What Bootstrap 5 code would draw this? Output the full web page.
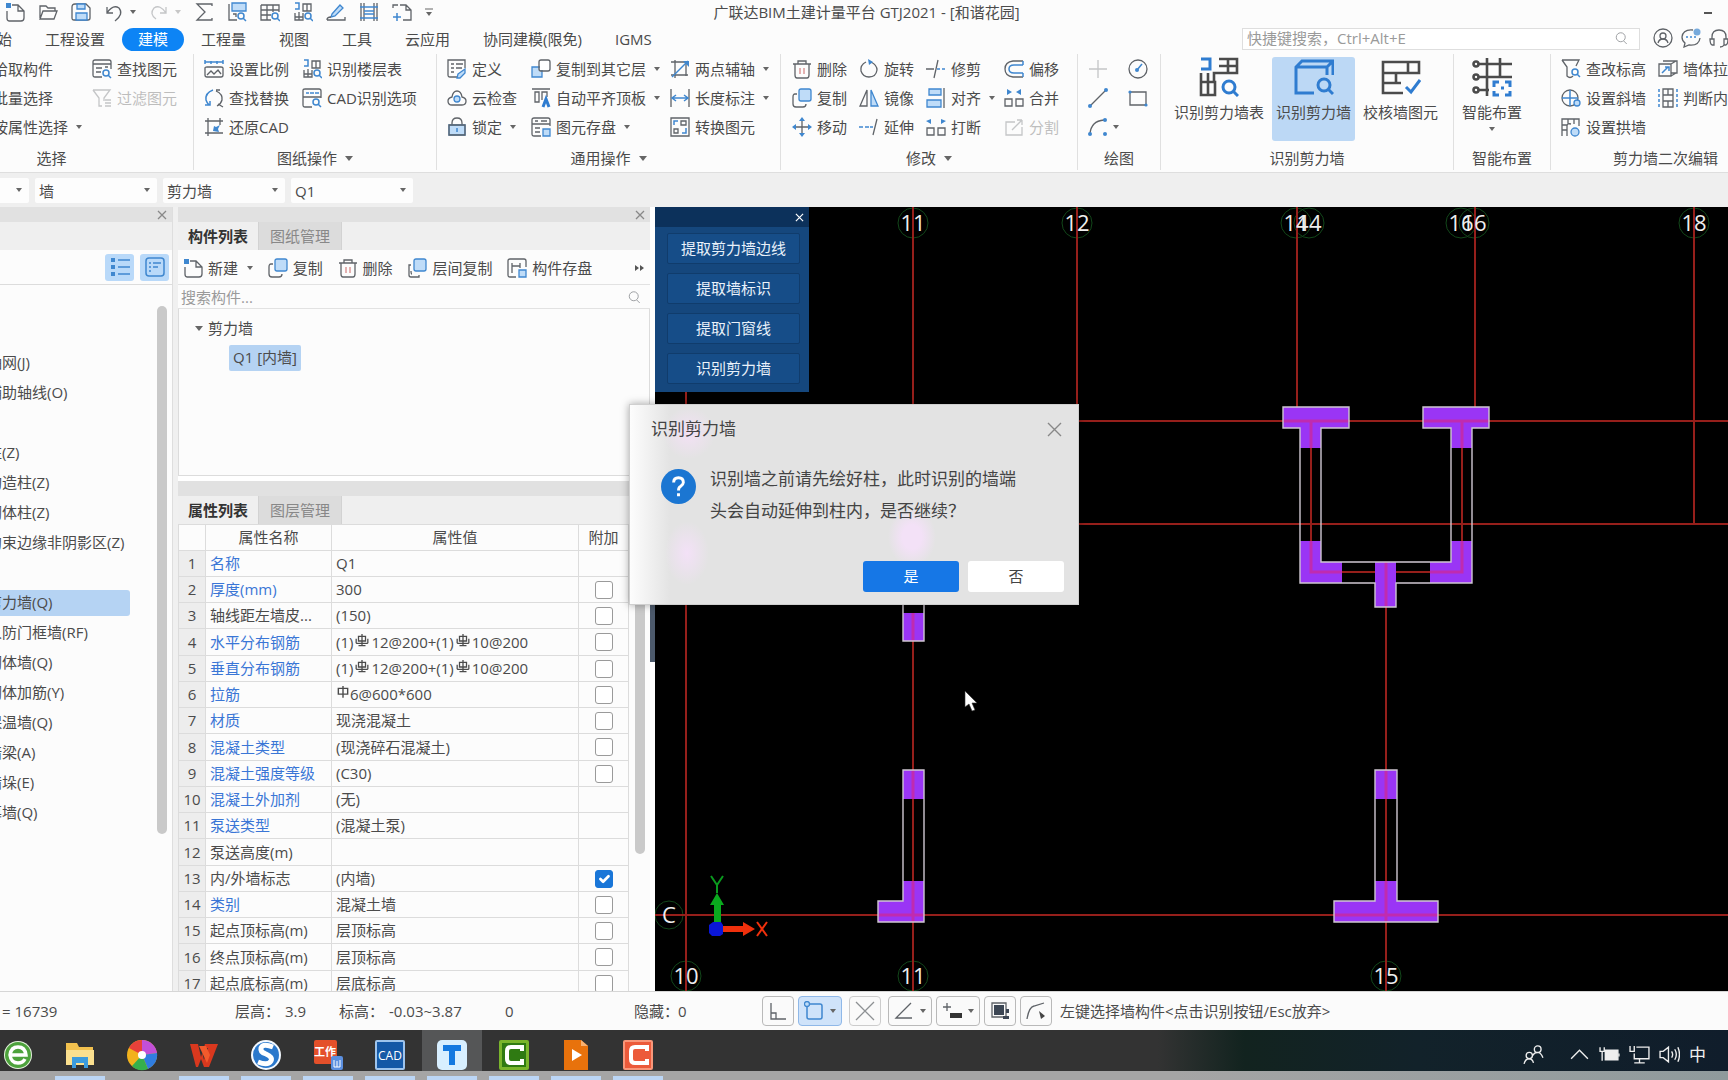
<!DOCTYPE html>
<html lang="zh-CN">
<head>
<meta charset="utf-8">
<meta name="viewport" content="width=device-width, initial-scale=1">
<title>广联达BIM土建计量平台 GTJ2021 - [和谐花园]</title>
<link href="https://cdn.jsdelivr.net/npm/bootstrap@5.3.0/dist/css/bootstrap.min.css" rel="stylesheet">
<style>
:root{--ink:#4b4b4b;--blue:#3f87cf;--line:#dcdcdc;--sel:#b5d3f3}
body{font:15px/20px "Open Sans","Noto Sans CJK SC",sans-serif;color:var(--ink);background:#f0f0f0}
button,input,select{font:inherit;color:inherit}
.app{height:100vh;overflow:hidden}
.bare{background:none;border:0;padding:0;white-space:nowrap}
svg.ic{width:20px;height:20px;flex:none;display:block}
svg.ic.sm{width:15px;opacity:.6}
.side{flex:1 1 0}
.k{fill:none;stroke:#5f6368;stroke-width:1.3}
.b{fill:none;stroke:var(--blue);stroke-width:1.5}
.f{fill:#bfdcf8;stroke:var(--blue);stroke-width:1.3}
.s{fill:var(--blue)}
.kk{fill:none;stroke:#4b4b4b;stroke-width:2.6}
.bb{fill:none;stroke:#2f7cd0;stroke-width:3}
.dim{opacity:.35}
.tri{width:0;height:0;border:4px solid transparent;border-top:5px solid #666;border-bottom:0;flex:none}
.tri-sm{border-width:3px;border-top-width:4px;border-bottom-width:0}
/* title and menu */
.topbar{background:#fcfcfc;height:27px;flex:none;padding-bottom:3px}
.quick{gap:13px;padding-left:5px}
.quick .split{gap:6px}
.menubar{background:#fcfcfc;height:27px;flex:none;padding-bottom:2px}
.menubar .nav{gap:1px;margin-left:-34px}
.menubar .nav-link{padding:1px 16px 2px;border-radius:12px;color:var(--ink);white-space:nowrap}
.menubar .nav-link.active{background:#0d84f5;color:#fff}
.keysearch{width:398px;height:22px;border:1px solid #dedede;padding:0 10px 2px 4px;margin-bottom:2px;background:#fff}
.plain-input{border:0;background:none;outline:0;min-width:0;padding:0}
.plain-input::placeholder{color:#9a9a9a;opacity:1}
.corner{gap:8px;width:88px;padding:0 0 3px 13px}
/* ribbon */
.ribbon{background:#fcfcfc;height:119px;margin-left:-90px;flex:none;border-bottom:1px solid #dedede}
.rgroup{border-right:1px solid #e0e0e0;margin:0 0 2px;flex:none}
.rgrid{display:grid;grid-auto-rows:29px;align-items:center;align-content:start;flex:1}
.rbtn{display:flex;align-items:center;gap:5px}
.rbtn .tri{margin-left:3px}
.rtitle{height:24px;display:flex;align-items:center;justify-content:center;gap:8px}
.g1{width:284px;padding-left:58px}.g1 .rgrid{grid-template-columns:124px 1fr}.g1 .rtitle{margin-left:-58px}
.g2{width:243px}.g2 .rgrid{grid-template-columns:98px 1fr;padding-left:10px}
.g3{width:344px}.g3 .rgrid{grid-template-columns:84px 139px 1fr;padding-left:10px}
.g4{width:297px}.g4 .rgrid{grid-template-columns:67px 67px 78px 1fr;padding-left:11px}
.g5{width:83px}.g5 .rgrid{grid-template-columns:40px 1fr;padding-left:10px}
.g6{width:293px}.g7{width:97px}
.g8{width:230px}.g8 .rgrid{grid-template-columns:97px 1fr;padding-left:10px}
.bigs{flex:1;gap:4px;padding:3px 9px 0}
.big{display:flex;flex-direction:column;align-items:center;border-radius:3px;height:84px;padding:0 4px;gap:5px}
.big svg{width:40px;height:40px}
.big.on{background:#bcd8f5}
/* option bar */
.optbar{height:34px;flex:none;background:#efefef;gap:6px;margin-left:-93px;padding-top:5px}
.pick{position:relative;width:122px;height:25px}
.pick select{appearance:none;width:100%;height:100%;border:0;border-radius:2px;background:#fdfdfd;padding:0 4px}
.pick .tri{position:absolute;right:7px;top:10px;pointer-events:none}
/* docks */
.dock{background:#fcfcfc}
.grip{background:#e1e1e1;height:15px;padding:1px 5px 0 0;flex:none;color:#888}
.grip svg{width:10px;height:10px}
.dock-left{width:173px;flex:none;border-right:1px solid #dedede}
.viewbar{height:35px;border-bottom:1px solid #dcdcdc;gap:6px;padding-right:3px;flex:none}
.viewbar button{width:29px;height:27px;background:#b9d9f9;border-radius:3px;display:grid;place-items:center}
.tree{width:130px;padding-top:65px;margin:0;list-style:none}
.tree li{height:26px;margin:0 0 4px -13px;line-height:25px;white-space:nowrap}
.tree li.on{background:var(--sel);border-radius:0 3px 3px 0}
.tree a{color:inherit;text-decoration:none}
.vbar{width:10px;border-radius:5px;background:#c9c9c9;flex:none}
.dock-left .vbar{height:528px;margin:21px 5px 0 auto}
.dock-mid{width:472px;margin-left:5px;flex:none}
.tabs2{background:#efefef;height:28px;flex:none}
.tabs2 button{height:28px;padding:0 10px;border-right:1px solid #d2d2d2}
.tabs2 .on{font-weight:600;color:#333}
.tabs2 .off{background:#dcdcdc;color:#888;padding:0 11px}
.tools{height:35px;border-bottom:1px solid #e2e2e2;padding:2px 5px 0 5px;flex:none}
.tools button{display:flex;align-items:center;gap:5px;line-height:20px}
.tools .last{margin-right:28px}
.find{height:24px;border-bottom:1px solid #e2e2e2;padding:0 8px 0 3px;flex:none}
.parts{height:167px;border:1px solid #dcdcdc;border-top:0;padding:9px 20px;flex:none}
.parts .leaf{display:inline-block;margin:7px 0 0 30px;background:var(--sel);border-radius:2px;height:26px;line-height:25px;padding:0 4px}
.parts .twig{gap:5px;margin-left:-4px}
.gapline{height:5px;background:#fff;flex:none}
.props{width:450px;table-layout:fixed;border-collapse:collapse}
.props th,.props td{height:26px;line-height:20px;padding:2px 4px 3px;border:1px solid #dcdcdc;white-space:nowrap;overflow:hidden;font-weight:400}
.props tbody tr:nth-child(4n) td{height:27px}
.props thead th{text-align:center}
.props td:first-child{background:#ededed;text-align:center;padding:2px 0 3px}
.props td:nth-child(2){color:#3a76d6}
.props tr.own td:nth-child(2){color:var(--ink)}
.props td:last-child{padding:0;text-align:center}
.props input{appearance:none;width:18px;height:18px;border:1px solid #9a9a9a;border-radius:3px;background-color:#fff;display:block;margin:0 auto;float:none}
.props .form-check-input{border-radius:3px;margin:0 auto}
.props .form-check-input:checked{background-color:#1976d8;border-color:#1976d8;background-size:18px}
.props svg{width:14px;height:14px;vertical-align:0;margin:0 2px}
.clip{overflow:hidden;min-height:0;flex:1}
.dock-mid .vbar{height:330px;margin-left:6px}
.split-v{width:5px;flex:none;background:#fff;padding-top:398px}
.split-v div{height:57px;background:#4c596b}
/* drawing area */
.view{position:relative;flex:1;background:#000;min-width:0}
.view>svg{position:absolute;inset:0;width:100%;height:100%}
.ax{stroke:#961f1b;stroke-width:2;fill:none}
.ov{stroke:#f0205a;stroke-opacity:.45;stroke-width:3;fill:none}
.col-fill{fill:#9a35f5}
.edge{fill:none;stroke:#cfc8d2;stroke-width:1.4}
.bub{fill:none;stroke:#12471a;stroke-width:1}
.lbl{fill:#eee;font-size:22px;text-anchor:middle}
.steps{position:absolute;left:0;top:0;width:154px;height:185px;background:#15477d}
.steps header{height:20px;background:#0c315b;display:flex;justify-content:flex-end;align-items:center;padding-right:5px}
.steps .stack{display:grid;gap:9px;padding:6px 9px 0 12px}
.steps .stack button{height:31px;border:1px solid #103c6c;border-radius:2px;background:#164d88;color:#e9f1fa;line-height:20px;padding:0 0 2px}
.ask{position:absolute;left:-26px;top:197px;width:450px;height:201px;border:1px solid #cfcfcf;color:#444;font-size:17px;line-height:32px;box-shadow:0 0 8px rgba(0,0,0,.35);
background:radial-gradient(circle at 59px 28px,#f3e1f5 0,transparent 26px),radial-gradient(ellipse 22px 32px at 57px 148px,#f3e1f7 0,transparent 100%),radial-gradient(ellipse 24px 30px at 282px 132px,#f3e1f7 40%,transparent 100%),linear-gradient(90deg,#fdfdfd 0,#f4f4f4 14px,#e3e3e3 40px)}
.ask .head{padding:8px 16px 0 21px}
.ask .body2{gap:14px;padding:11px 20px 0 31px}
.ask .body2 svg{width:35px;height:35px;margin-top:13px;flex:none}
.ask .body2 div{padding-top:7px}
.ask .foot{gap:9px;padding:34px 14px 0 0}
.ask .foot button{width:96px;height:31px;border:0;border-radius:3px;font-size:15px;line-height:20px;padding:0 0 2px}
.ask .yes{background:#1677e6;color:#fff}.ask .no{background:#fff;color:#444}
/* status */
.status{height:39px;flex:none;background:#fbfbfb;border-top:1px solid #d6d6d6;padding:0 0 1px 2px}
.status span{white-space:nowrap;flex:none}
.st1{width:233px}.st2{width:50px}.st3{width:54px}.st4{width:50px}.st5{width:116px}.st6{width:129px}.st7{width:44px}.st8{width:84px}
.stools{gap:4px;margin-right:8px}
.stools button{height:30px;min-width:31px;border:1px solid #b9b9b9;border-radius:4px;background:#fafafa;display:flex;align-items:center;justify-content:center;gap:6px;padding:0 5px}
.stools .on{background:#cfe3fa;border-color:#8fb8e8}
.stools .idle{margin:0 3px;opacity:.7}
/* taskbar */
.task{height:41px;flex:none;background:linear-gradient(90deg,#333 0,#333 67%,#12231f 72%,#12222a 82%,#101d2b)}
.task .apps,.under{gap:2px;margin-left:-12px}
.task .apps button{width:60px;height:41px;display:grid;place-items:end center}
.task .apps .on{background:#555657}
.task .apps svg{width:32px;height:32px;display:block}
.tray{color:#eee;padding:8px 22px 0 0;gap:9px}
.tray svg{width:21px;height:21px;fill:none;stroke:#eee;stroke-width:1.3;display:block}
.tray span{font-size:17px}
.strip{height:9px;flex:none;background:linear-gradient(90deg,#a5a5a5 68%,#8f9a9c)}
.under i{width:60px;height:9px;padding:5px 5px 0}
.under i b{display:block;height:4px;background:#bcd6f5}
</style>
<script src="https://cdn.jsdelivr.net/npm/bootstrap@5.3.0/dist/js/bootstrap.bundle.min.js"></script>
</head>
<body>
<svg width="0" height="0" class="position-absolute" aria-hidden="true"><defs>
<symbol id="new" viewBox="0 0 20 20"><path class="k" d="M7 3h6l6 6v7q0 3-3 3H4q-2 0-2-3V9M13 3v6h6"/><path class="s" d="M1 1h5v5H1z"/></symbol>
<symbol id="open" viewBox="0 0 20 20"><path class="k" d="M2 16V4h6l2 2h7v3M2 17l3-8h14l-3 8z"/></symbol>
<symbol id="save" viewBox="0 0 20 20"><path class="k" d="M4 2h11l4 4v10q0 2-2 2H3q-2 0-2-2V5q0-3 3-3z"/><path class="f" d="M6 2h8v5H6zM5 11h11v7H5z"/></symbol>
<symbol id="undo" viewBox="0 0 20 20"><path class="k" d="M3 5v6h6M3 11q6-9 12-5 5 6-4 13"/></symbol>
<symbol id="redo" viewBox="0 0 20 20"><path class="k" d="M17 5v6h-6M17 11Q11 2 5 6q-5 6 2 11"/></symbol>
<symbol id="sum" viewBox="0 0 20 20"><path class="k" d="M18 4V2H3l8 8-8 8h15v-2"/></symbol>
<symbol id="flr" viewBox="0 0 20 20"><path class="f" d="M5 1h14v8H5z"/><path class="k" d="M2 2v16h8M6 12h3v3"/><circle class="b" cx="14" cy="14" r="3"/><path class="b" d="M16 16l3 3"/></symbol>
<symbol id="grid" viewBox="0 0 20 20"><path class="k" d="M1 3h18v7M1 3v15h10M1 8h18M1 13h10M7 3v15M13 3v7"/><circle class="b" cx="15" cy="14" r="3"/><path class="b" d="M17 16l3 3"/></symbol>
<symbol id="jz" viewBox="0 0 20 20"><path class="b" d="M2 1h4v6H2"/><path class="k" d="M10 2h8v7h-8zM14 2v7M2 11v7h8v-7M2 15h8M6 10v8"/><circle class="b" cx="15" cy="14" r="3"/><path class="b" d="M17 16l3 3"/></symbol>
<symbol id="pen" viewBox="0 0 20 20"><path class="f" d="M6 12l8-9 3 3-8 8-4 1z"/><path class="k" d="M1 18h18v-3M1 18q0-3 4-3"/></symbol>
<symbol id="film" viewBox="0 0 20 20"><path class="k" d="M2 1v18M5 1v18M15 1v18M18 1v18"/><path class="b" d="M1 5h18M5 9h10M5 12h10M1 16h18"/></symbol>
<symbol id="exp" viewBox="0 0 20 20"><path class="k" d="M1 6V3h5M8 3h6l5 5v10h-8M14 3v5h5"/><path class="b" d="M5 11v8M1 15h8"/></symbol>
<symbol id="find" viewBox="0 0 20 20"><path class="k" d="M10 18H3q-2 0-2-2V3q0-2 2-2h14q2 0 2 2v7M1 5h18M4 9h6M4 13h5M13 8h3"/><circle class="b" cx="14" cy="14" r="3"/><path class="b" d="M16 16l3 3"/></symbol>
<symbol id="filt" viewBox="0 0 20 20"><path class="k" d="M1 2h17l-6 8v3M1 2l6 8v8h3M13 12h6M13 15h6M13 18h6"/></symbol>
<symbol id="scale" viewBox="0 0 20 20"><path class="b" d="M1 1v4M19 1v4M1 3h18M7 2v3M13 2v3"/><path class="k" d="M1 9v7q0 2 2 2h14q2 0 2-2V9q0-1-2-1H3q-2 0-2 1zM3 16l4-4 3 3 4-4 3 4"/></symbol>
<symbol id="swap" viewBox="0 0 20 20"><path class="b" d="M9 2Q1 5 2 12q1 3 3 5M1 17h5v-4"/><path class="k" d="M12 3q7 3 6 9-1 4-5 6M12 2h4M14 16l5 3"/></symbol>
<symbol id="cad" viewBox="0 0 20 20"><path class="k" d="M10 19H3q-2 0-2-2V2q0-1 2-1h14q2 0 2 2v7M1 9h18"/><path class="b" d="M4 5h3M8 5h4M13 5h4"/><circle class="b" cx="14" cy="14" r="3"/><path class="b" d="M16 16l3 3"/></symbol>
<symbol id="rest" viewBox="0 0 20 20"><path class="k" d="M4 1v18M1 4h18M16 1v7M1 16h18"/><path class="s" d="M9 14l1-5 2 1 4-2-2 4 1 3z"/></symbol>
<symbol id="def" viewBox="0 0 20 20"><path class="k" d="M10 18H3q-2 0-2-2V1h17v8M4 5h3M9 5h7M4 9h3M9 9h6M4 13h3"/><path class="f" d="M11 15l7-5v4l-5 5h-3z"/></symbol>
<symbol id="cloud" viewBox="0 0 20 20"><path class="k" d="M5 17Q1 17 1 13q0-3 4-4 1-6 5-6t5 6q4 1 4 4 0 4-4 4z"/><circle class="f" cx="10" cy="11" r="3"/></symbol>
<symbol id="lock" viewBox="0 0 20 20"><path class="k" d="M5 8V6q0-5 5-5t5 5v2"/><path class="f" d="M2 8h16v10H2z"/><path class="k" d="M2 8h16v10H2z"/><path class="b" d="M10 11v4"/></symbol>
<symbol id="cpy2" viewBox="0 0 20 20"><path class="f" d="M1 8h10v10H1z"/><path fill="#fff" d="M9 2h9v9H9z"/><path class="k" d="M10 1h7q2 0 2 2v7q0 2-2 2h-7q-2 0-2-2V3q0-2 2-2z"/></symbol>
<symbol id="copy" viewBox="0 0 20 20"><path class="k" d="M5 6H3q-2 0-2 3v7q0 3 3 3h7q3 0 3-3"/><path class="f" d="M9 1h8q2 0 2 2v8q0 2-2 2H9q-2 0-2-2V3q0-2 2-2z"/></symbol>
<symbol id="auto" viewBox="0 0 20 20"><path class="k" d="M1 1h18M4 4h4v10H4zM11 12V4h5v5"/><path class="bb" d="M12 19l3-8 3 8"/></symbol>
<symbol id="disk" viewBox="0 0 20 20"><path class="k" d="M10 19H3q-2 0-2-2V3q0-2 2-2h14q2 0 2 2v6M1 7h18M4 4h3M10 4h6M4 11h5M4 15h5"/><path class="f" d="M12 12h7v7h-7z"/></symbol>
<symbol id="axis" viewBox="0 0 20 20"><path class="k" d="M5 1v18M1 3h17M1 16h17M16 3v14"/><path class="b" d="M2 18L18 2"/><path class="s" d="M13 2h6v6z"/></symbol>
<symbol id="len" viewBox="0 0 20 20"><path class="k" d="M1 1v18M19 1v18"/><path class="b" d="M2 10h16M6 7l-4 3 4 3M14 7l4 3-4 3"/></symbol>
<symbol id="conv" viewBox="0 0 20 20"><path class="k" d="M1 1h18v18H1zM11 4h5v4h-5zM4 12h4v4H4z"/><path class="b" d="M4 8V4h4M12 16h4v-5"/></symbol>
<symbol id="del" viewBox="0 0 20 20"><path class="k" d="M1 5h18M6 5V2h8v3M3 5v11q0 3 2 3h10q2 0 2-3V5"/><path d="M8 9v6M12 9v6" stroke="#c66" fill="none"/></symbol>
<symbol id="move" viewBox="0 0 20 20"><path class="k" d="M10 2v16M2 10h16"/><path class="s" d="M10 0l3 4H7zM10 20l3-4H7zM0 10l4-3v6zM20 10l-4-3v6z"/></symbol>
<symbol id="rot" viewBox="0 0 20 20"><path class="k" d="M7 3q-6 3-5 9 2 6 8 6 7 0 8-7 0-5-6-8"/><path class="s" d="M9 0l5 3-4 3z"/></symbol>
<symbol id="mir" viewBox="0 0 20 20"><path class="k" d="M8 2v16H1z"/><path class="f" d="M12 2v16h7z"/></symbol>
<symbol id="ext" viewBox="0 0 20 20"><path class="b" d="M0 10h4M6 10h4M11 10h3"/><path class="k" d="M18 2l-4 16"/></symbol>
<symbol id="trim" viewBox="0 0 20 20"><path class="k" d="M12 1L8 19M0 10h8"/><path class="b" d="M11 10h3M16 10h3"/></symbol>
<symbol id="align" viewBox="0 0 20 20"><path class="f" d="M3 1h12v6H3zM1 12h14v7H1z"/><path class="k" d="M18 0v20"/></symbol>
<symbol id="brk" viewBox="0 0 20 20"><path class="k" d="M1 11h7v7H1zM12 11h7v7h-7z"/><path class="s" d="M0 4l5-2v5zM20 4l-5-2v5z"/></symbol>
<symbol id="off" viewBox="0 0 20 20"><path class="k" d="M19 2H9Q1 3 1 10t8 8h10"/><path class="b" d="M19 6h-9q-5 0-5 4t5 4h9M19 2v4M19 14v4"/></symbol>
<symbol id="mrg" viewBox="0 0 20 20"><path class="k" d="M1 11h7v7H1zM12 11h7v7h-7z"/><path class="s" d="M3 1l5 3-5 3zM17 1l-5 3 5 3z"/></symbol>
<symbol id="cut" viewBox="0 0 20 20"><path class="k" d="M11 5H2v13h16v-8M8 13L18 3M18 3h-5M18 3v5"/></symbol>
<symbol id="pt" viewBox="0 0 20 20"><path class="k" d="M10 1v18M1 10h18"/></symbol>
<symbol id="circ" viewBox="0 0 20 20"><circle class="k" cx="10" cy="10" r="9"/><path class="b" d="M9 11l5-6"/><circle class="s" cx="9" cy="11" r="2"/></symbol>
<symbol id="ln" viewBox="0 0 20 20"><path class="k" d="M2 18L18 2"/><circle class="s" cx="2" cy="18" r="2"/><circle class="s" cx="18" cy="2" r="2"/></symbol>
<symbol id="rc" viewBox="0 0 20 20"><path class="k" d="M2 4h16v13H2z"/><circle class="s" cx="2" cy="4" r="1.6"/><circle class="s" cx="18" cy="17" r="1.6"/></symbol>
<symbol id="arc" viewBox="0 0 20 20"><path class="k" d="M2 17Q3 4 16 3"/><circle class="s" cx="2" cy="17" r="2"/><circle class="s" cx="17" cy="3" r="2"/><circle class="s" cx="17" cy="17" r="2"/></symbol>
<symbol id="B1" viewBox="0 0 40 40"><path class="bb" d="M2 2h9v10H2"/><path class="kk" d="M20 2h18v14H15v9M29 2v14M20 9h18M2 16v22h14V25H2M9 16v22"/><circle class="bb" cx="30" cy="30" r="6"/><path class="bb" d="M34 34l5 5"/></symbol>
<symbol id="B2" viewBox="0 0 40 40"><path class="bb" d="M20 36H2V10l6-6h31v14M2 10h31v8M33 10l5-5"/><circle class="bb" cx="30" cy="28" r="6"/><path class="bb" d="M34 32l5 5"/></symbol>
<symbol id="B3" viewBox="0 0 40 40"><path class="kk" d="M22 36H2V5h36v11H2M27 5v11M15 16v10M2 26h18"/><path class="bb" d="M25 30l5 5 9-12"/></symbol>
<symbol id="B4" viewBox="0 0 40 40"><path class="kk" d="M7 7h33M7 20h33M7 33h10M15 1v38M28 1v19"/><circle class="kk" cx="4" cy="7" r="2.5"/><circle class="kk" cx="4" cy="20" r="2.5"/><circle class="kk" cx="4" cy="33" r="2.5"/><path class="bb" d="M22 30v-5h5M33 25h5v5M22 34v4h5M33 38h5v-4M29 31h3"/></symbol>
<symbol id="chk" viewBox="0 0 20 20"><path class="k" d="M1 1h17l-3 6M1 1l5 7v9q3 3 6 0"/><circle class="b" cx="14" cy="13" r="3"/><path class="b" d="M16 15l3 3"/></symbol>
<symbol id="slope" viewBox="0 0 20 20"><circle class="k" cx="9" cy="10" r="8"/><path class="b" d="M9 2v16M1 10h16"/><circle class="f" cx="16" cy="15" r="3"/></symbol>
<symbol id="arch" viewBox="0 0 20 20"><path class="k" d="M1 19V2h17v7M6 19V9q0-3 4-2M1 8h5M1 13h5M7 2v5M13 2v5"/><circle class="f" cx="14" cy="15" r="4"/></symbol>
<symbol id="wall" viewBox="0 0 20 20"><path class="k" d="M1 5h12v12H1zM5 2h14v12h-6M13 5l5-3M13 17l5-3"/><path class="b" d="M4 14l6-6M7 8h4v4"/></symbol>
<symbol id="io" viewBox="0 0 20 20"><path class="b" stroke-dasharray="3 2" d="M1 1v18M19 1v18"/><path class="k" d="M5 1h10v18H5zM5 7h10M5 13h10M10 1v6M10 13v6"/></symbol>
<symbol id="mag" viewBox="0 0 20 20"><circle class="k" cx="9" cy="9" r="6"/><path class="k" d="M13 14l4 4"/></symbol>
<symbol id="user" viewBox="0 0 20 20"><circle class="k" cx="10" cy="10" r="9"/><circle class="k" cx="10" cy="8" r="3"/><path class="k" d="M5 15q1-4 5-4t5 4"/></symbol>
<symbol id="msg" viewBox="0 0 20 20"><path class="k" d="M12 2Q2 1 1 9q0 4 3 6l-1 4 5-2q10 1 11-7"/><circle class="s" cx="16" cy="4" r="3.5" opacity=".7"/><path class="b" d="M5 9h2M9 9h2M13 9h2"/></symbol>
<symbol id="ear" viewBox="0 0 20 20"><path class="k" d="M3 11V9q0-7 7-7t7 7v2M1 11h4v6H3q-2-1-2-6zM19 11h-4v6h2q2-1 2-6zM15 17q-1 2-4 2"/></symbol>
<symbol id="xx" viewBox="0 0 10 10"><path d="M1 1l8 8M9 1L1 9" stroke="currentColor" stroke-width="1.3"/></symbol>
<symbol id="lst" viewBox="0 0 20 20"><path class="b" d="M8 3h12M8 10h12M8 17h12"/><path class="s" d="M1 1h4v4H1zM1 8h4v4H1zM1 15h4v4H1z"/></symbol>
<symbol id="note" viewBox="0 0 20 20"><rect class="b" x="1" y="1" width="18" height="18" rx="3"/><path class="b" d="M4 6h2M8 6h8M4 10h2M8 10h5M4 14h2"/></symbol>
<symbol id="lvl" viewBox="0 0 20 20"><path class="k" d="M4 7H2v10q0 2 2 2h8v-2M5 16q-1 0-1-3"/><path class="f" d="M9 1h8q2 0 2 2v8q0 2-2 2H9q-2 0-2-2V3q0-2 2-2z"/></symbol>
<symbol id="cdk" viewBox="0 0 20 20"><path class="k" d="M9 19H3q-2 0-2-2V3q0-2 2-2h14q2 0 2 2v6M5 5v10M5 8h8M13 5v5"/><path class="f" d="M12 12h7v7h-7z"/></symbol>
<symbol id="r3" viewBox="0 0 12 12"><path fill="none" stroke="#4b4b4b" stroke-width="1.1" d="M6 0v10M1 4v4M11 4v4M3 2h6v4H3zM1 8h10M3 10h6"/></symbol>
<symbol id="r1" viewBox="0 0 12 12"><path fill="none" stroke="#4b4b4b" stroke-width="1.2" d="M6 0v10M2 2h8v5H2z"/></symbol>
</defs></svg>

<div class="app d-flex flex-column">
<header class="topbar d-flex align-items-center">
  <div class="quick side d-flex align-items-center">
    <button class="bare" aria-label="新建"><svg class="ic"><use href="#new"/></svg></button>
    <button class="bare" aria-label="打开"><svg class="ic"><use href="#open"/></svg></button>
    <button class="bare" aria-label="保存"><svg class="ic"><use href="#save"/></svg></button>
    <button class="bare split d-flex align-items-center" aria-label="撤销"><svg class="ic"><use href="#undo"/></svg><span class="tri tri-sm"></span></button>
    <button class="bare split d-flex align-items-center dim" aria-label="恢复"><svg class="ic"><use href="#redo"/></svg><span class="tri tri-sm"></span></button>
    <button class="bare" aria-label="汇总"><svg class="ic"><use href="#sum"/></svg></button>
    <button class="bare" aria-label="楼层"><svg class="ic"><use href="#flr"/></svg></button>
    <button class="bare" aria-label="表格"><svg class="ic"><use href="#grid"/></svg></button>
    <button class="bare" aria-label="识别"><svg class="ic"><use href="#jz"/></svg></button>
    <button class="bare" aria-label="编辑"><svg class="ic"><use href="#pen"/></svg></button>
    <button class="bare" aria-label="视频"><svg class="ic"><use href="#film"/></svg></button>
    <button class="bare" aria-label="导出"><svg class="ic"><use href="#exp"/></svg></button>
    <button class="bare" aria-label="更多"><svg class="d-block" width="8" height="8"><path d="M0 1h8" stroke="#666"/><path d="M1 4h6L4 8z" fill="#666"/></svg></button>
  </div>
  <div>广联达BIM土建计量平台 GTJ2021 - [和谐花园]</div>
  <div class="side d-flex justify-content-end"><button class="bare pe-3" aria-label="最小化"><svg width="8" height="8" class="d-block"><path d="M0 5h8" stroke="#555" stroke-width="2"/></svg></button></div>
</header>
<div class="menubar d-flex align-items-center">
  <nav class="nav nav-pills flex-nowrap">
    <a class="nav-link" href="#">开始</a><a class="nav-link" href="#">工程设置</a><a class="nav-link active" href="#">建模</a><a class="nav-link" href="#">工程量</a><a class="nav-link" href="#">视图</a><a class="nav-link" href="#">工具</a><a class="nav-link" href="#">云应用</a><a class="nav-link" href="#">协同建模(限免)</a><a class="nav-link" href="#">IGMS</a>
  </nav>
  <div class="keysearch d-flex align-items-center ms-auto"><input class="plain-input flex-fill" aria-label="快捷键搜索" placeholder="快捷键搜索，Ctrl+Alt+E"><svg class="ic sm"><use href="#mag"/></svg></div>
  <div class="corner d-flex"><svg class="ic"><use href="#user"/></svg><svg class="ic"><use href="#msg"/></svg><svg class="ic"><use href="#ear"/></svg></div>
</div>
<section class="ribbon d-flex">
  <div class="rgroup g1 d-flex flex-column"><div class="rgrid">
    <button class="bare rbtn"><svg class="ic"><use href="#find"/></svg>拾取构件</button><button class="bare rbtn"><svg class="ic"><use href="#find"/></svg>查找图元</button>
    <button class="bare rbtn"><svg class="ic"><use href="#grid"/></svg>批量选择</button><button class="bare rbtn dim"><svg class="ic"><use href="#filt"/></svg>过滤图元</button>
    <button class="bare rbtn"><svg class="ic"><use href="#def"/></svg>按属性选择<span class="tri tri-sm"></span></button></div>
    <div class="rtitle">选择</div></div>
  <div class="rgroup g2 d-flex flex-column"><div class="rgrid">
    <button class="bare rbtn"><svg class="ic"><use href="#scale"/></svg>设置比例</button><button class="bare rbtn"><svg class="ic"><use href="#jz"/></svg>识别楼层表</button>
    <button class="bare rbtn"><svg class="ic"><use href="#swap"/></svg>查找替换</button><button class="bare rbtn"><svg class="ic"><use href="#cad"/></svg>CAD识别选项</button>
    <button class="bare rbtn"><svg class="ic"><use href="#rest"/></svg>还原CAD</button></div>
    <div class="rtitle">图纸操作<span class="tri"></span></div></div>
  <div class="rgroup g3 d-flex flex-column"><div class="rgrid">
    <button class="bare rbtn"><svg class="ic"><use href="#def"/></svg>定义</button><button class="bare rbtn"><svg class="ic"><use href="#cpy2"/></svg>复制到其它层<span class="tri tri-sm"></span></button><button class="bare rbtn"><svg class="ic"><use href="#axis"/></svg>两点辅轴<span class="tri tri-sm"></span></button>
    <button class="bare rbtn"><svg class="ic"><use href="#cloud"/></svg>云检查</button><button class="bare rbtn"><svg class="ic"><use href="#auto"/></svg>自动平齐顶板<span class="tri tri-sm"></span></button><button class="bare rbtn"><svg class="ic"><use href="#len"/></svg>长度标注<span class="tri tri-sm"></span></button>
    <button class="bare rbtn"><svg class="ic"><use href="#lock"/></svg>锁定<span class="tri tri-sm"></span></button><button class="bare rbtn"><svg class="ic"><use href="#disk"/></svg>图元存盘<span class="tri tri-sm"></span></button><button class="bare rbtn"><svg class="ic"><use href="#conv"/></svg>转换图元</button></div>
    <div class="rtitle">通用操作<span class="tri"></span></div></div>
  <div class="rgroup g4 d-flex flex-column"><div class="rgrid">
    <button class="bare rbtn"><svg class="ic"><use href="#del"/></svg>删除</button><button class="bare rbtn"><svg class="ic"><use href="#rot"/></svg>旋转</button><button class="bare rbtn"><svg class="ic"><use href="#trim"/></svg>修剪</button><button class="bare rbtn"><svg class="ic"><use href="#off"/></svg>偏移</button>
    <button class="bare rbtn"><svg class="ic"><use href="#copy"/></svg>复制</button><button class="bare rbtn"><svg class="ic"><use href="#mir"/></svg>镜像</button><button class="bare rbtn"><svg class="ic"><use href="#align"/></svg>对齐<span class="tri tri-sm"></span></button><button class="bare rbtn"><svg class="ic"><use href="#mrg"/></svg>合并</button>
    <button class="bare rbtn"><svg class="ic"><use href="#move"/></svg>移动</button><button class="bare rbtn"><svg class="ic"><use href="#ext"/></svg>延伸</button><button class="bare rbtn"><svg class="ic"><use href="#brk"/></svg>打断</button><button class="bare rbtn dim"><svg class="ic"><use href="#cut"/></svg>分割</button></div>
    <div class="rtitle">修改<span class="tri"></span></div></div>
  <div class="rgroup g5 d-flex flex-column"><div class="rgrid">
    <button class="bare rbtn dim" aria-label="点"><svg class="ic"><use href="#pt"/></svg></button><button class="bare rbtn" aria-label="圆"><svg class="ic"><use href="#circ"/></svg></button>
    <button class="bare rbtn" aria-label="直线"><svg class="ic"><use href="#ln"/></svg></button><button class="bare rbtn" aria-label="矩形"><svg class="ic"><use href="#rc"/></svg></button>
    <button class="bare rbtn" aria-label="弧"><svg class="ic"><use href="#arc"/></svg><span class="tri tri-sm ms-0"></span></button></div>
    <div class="rtitle">绘图</div></div>
  <div class="rgroup g6 d-flex flex-column"><div class="bigs d-flex">
    <button class="bare big"><svg><use href="#B1"/></svg>识别剪力墙表</button><button class="bare big on"><svg><use href="#B2"/></svg>识别剪力墙</button><button class="bare big"><svg><use href="#B3"/></svg>校核墙图元</button></div>
    <div class="rtitle">识别剪力墙</div></div>
  <div class="rgroup g7 d-flex flex-column"><div class="bigs d-flex ps-1">
    <button class="bare big"><svg><use href="#B4"/></svg>智能布置<span class="tri tri-sm"></span></button></div>
    <div class="rtitle">智能布置</div></div>
  <div class="rgroup g8 d-flex flex-column"><div class="rgrid">
    <button class="bare rbtn"><svg class="ic"><use href="#chk"/></svg>查改标高</button><button class="bare rbtn"><svg class="ic"><use href="#wall"/></svg>墙体拉通</button>
    <button class="bare rbtn"><svg class="ic"><use href="#slope"/></svg>设置斜墙</button><button class="bare rbtn"><svg class="ic"><use href="#io"/></svg>判断内外墙</button>
    <button class="bare rbtn"><svg class="ic"><use href="#arch"/></svg>设置拱墙</button></div>
    <div class="rtitle">剪力墙二次编辑</div></div>
</section>
<div class="optbar d-flex">
  <div class="pick"><select aria-label="楼层"><option></option></select><span class="tri tri-sm"></span></div>
  <div class="pick"><select aria-label="类别"><option>墙</option></select><span class="tri tri-sm"></span></div>
  <div class="pick"><select aria-label="类型"><option>剪力墙</option></select><span class="tri tri-sm"></span></div>
  <div class="pick"><select aria-label="构件"><option>Q1</option></select><span class="tri tri-sm"></span></div>
</div>
<main class="d-flex flex-fill overflow-hidden">
  <aside class="dock dock-left d-flex flex-column overflow-hidden">
    <div class="grip d-flex justify-content-end align-items-center"><svg><use href="#xx"/></svg></div>
    <div class="tabs2"></div>
    <div class="viewbar d-flex justify-content-end align-items-center"><button class="bare" aria-label="列表"><svg class="ic"><use href="#lst"/></svg></button><button class="bare" aria-label="详情"><svg class="ic"><use href="#note"/></svg></button></div>
    <div class="d-flex clip">
      <ul class="tree ps-0">
        <li><a href="#">轴网(J)</a></li><li><a href="#">辅助轴线(O)</a></li><li></li><li><a href="#">柱(Z)</a></li><li><a href="#">构造柱(Z)</a></li><li><a href="#">砌体柱(Z)</a></li><li><a href="#">约束边缘非阴影区(Z)</a></li><li></li><li class="on"><a href="#">剪力墙(Q)</a></li><li><a href="#">人防门框墙(RF)</a></li><li><a href="#">砌体墙(Q)</a></li><li><a href="#">砌体加筋(Y)</a></li><li><a href="#">保温墙(Q)</a></li><li><a href="#">暗梁(A)</a></li><li><a href="#">墙垛(E)</a></li><li><a href="#">幕墙(Q)</a></li>
      </ul>
      <div class="vbar"></div>
    </div>
  </aside>
  <section class="dock dock-mid d-flex flex-column">
    <div class="grip d-flex justify-content-end align-items-center"><svg><use href="#xx"/></svg></div>
    <div class="tabs2 d-flex"><button class="bare on">构件列表</button><button class="bare off">图纸管理</button></div>
    <div class="tools d-flex align-items-center justify-content-between">
      <button class="bare"><svg class="ic"><use href="#new"/></svg>新建<span class="tri tri-sm ms-1"></span></button><button class="bare"><svg class="ic"><use href="#copy"/></svg>复制</button><button class="bare"><svg class="ic"><use href="#del"/></svg>删除</button><button class="bare"><svg class="ic"><use href="#lvl"/></svg>层间复制</button><button class="bare last"><svg class="ic"><use href="#cdk"/></svg>构件存盘</button><button class="bare" aria-label="更多"><svg width="10" height="8"><path d="M0 1l4 3-4 3zM5 1l4 3-4 3z" fill="#555"/></svg></button>
    </div>
    <div class="find d-flex align-items-center"><input class="plain-input flex-fill" aria-label="搜索构件" placeholder="搜索构件..."><svg class="ic sm"><use href="#mag"/></svg></div>
    <div class="parts"><div class="twig d-flex align-items-center"><span class="tri"></span>剪力墙</div><span class="leaf">Q1 [内墙]</span></div>
    <div class="gapline"></div>
    <div class="grip"></div>
    <div class="tabs2 d-flex"><button class="bare on">属性列表</button><button class="bare off">图层管理</button></div>
    <div class="d-flex clip align-items-start">
    <table class="props">
      <colgroup><col style="width:27px"><col style="width:126px"><col style="width:247px"><col style="width:50px"></colgroup>
      <thead><tr><th></th><th>属性名称</th><th>属性值</th><th class="px-0">附加</th></tr></thead>
      <tbody>
      <tr><td>1</td><td>名称</td><td>Q1</td><td></td></tr>
      <tr><td>2</td><td>厚度(mm)</td><td>300</td><td><input type="checkbox" aria-label="厚度"></td></tr>
      <tr class="own"><td>3</td><td>轴线距左墙皮...</td><td>(150)</td><td><input type="checkbox" aria-label="轴线距左墙皮"></td></tr>
      <tr><td>4</td><td>水平分布钢筋</td><td>(1)<svg><use href="#r3"/></svg>12@200+(1)<svg><use href="#r3"/></svg>10@200</td><td><input type="checkbox" aria-label="水平分布钢筋"></td></tr>
      <tr><td>5</td><td>垂直分布钢筋</td><td>(1)<svg><use href="#r3"/></svg>12@200+(1)<svg><use href="#r3"/></svg>10@200</td><td><input type="checkbox" aria-label="垂直分布钢筋"></td></tr>
      <tr><td>6</td><td>拉筋</td><td><svg class="mx-0"><use href="#r1"/></svg>6@600*600</td><td><input type="checkbox" aria-label="拉筋"></td></tr>
      <tr><td>7</td><td>材质</td><td>现浇混凝土</td><td><input type="checkbox" aria-label="材质"></td></tr>
      <tr><td>8</td><td>混凝土类型</td><td>(现浇碎石混凝土)</td><td><input type="checkbox" aria-label="混凝土类型"></td></tr>
      <tr><td>9</td><td>混凝土强度等级</td><td>(C30)</td><td><input type="checkbox" aria-label="混凝土强度等级"></td></tr>
      <tr><td>10</td><td>混凝土外加剂</td><td>(无)</td><td></td></tr>
      <tr><td>11</td><td>泵送类型</td><td>(混凝土泵)</td><td></td></tr>
      <tr class="own"><td>12</td><td>泵送高度(m)</td><td></td><td></td></tr>
      <tr class="own"><td>13</td><td>内/外墙标志</td><td>(内墙)</td><td><input class="form-check-input" type="checkbox" checked aria-label="内/外墙标志"></td></tr>
      <tr><td>14</td><td>类别</td><td>混凝土墙</td><td><input type="checkbox" aria-label="类别"></td></tr>
      <tr class="own"><td>15</td><td>起点顶标高(m)</td><td>层顶标高</td><td><input type="checkbox" aria-label="起点顶标高"></td></tr>
      <tr class="own"><td>16</td><td>终点顶标高(m)</td><td>层顶标高</td><td><input type="checkbox" aria-label="终点顶标高"></td></tr>
      <tr class="own"><td>17</td><td>起点底标高(m)</td><td>层底标高</td><td><input type="checkbox" aria-label="起点底标高"></td></tr>
      </tbody>
    </table>
    <div class="vbar"></div>
    </div>
  </section>
  <div class="split-v"><div></div></div>
  <section class="view">
    <svg viewBox="655 207 1073 784" preserveAspectRatio="xMinYMin slice">
      <g class="bub"><circle cx="913" cy="223" r="15"/><circle cx="1077" cy="223" r="15"/><circle cx="1296" cy="223" r="15"/><circle cx="1309" cy="223" r="15"/><circle cx="1461" cy="223" r="15"/><circle cx="1474" cy="223" r="15"/><circle cx="1694" cy="223" r="15"/><circle cx="686" cy="976" r="15"/><circle cx="913" cy="976" r="15"/><circle cx="1386" cy="976" r="15"/><circle cx="669" cy="915" r="14"/></g>
      <path class="ax" d="M686 207V991M913 207V991M1077 207V524M1297 207V421M1475 207V421M1694 207V524M1386 572V991M655 421H1728M655 524H1728M655 915H1728M1311 421V572H1462V421"/>
      <g class="lbl"><text x="913" y="231">11</text><text x="1077" y="231">12</text><text x="1296" y="231">14</text><text x="1309" y="231">14</text><text x="1461" y="231">16</text><text x="1474" y="231">16</text><text x="1694" y="231">18</text><text x="686" y="984">10</text><text x="913" y="984">11</text><text x="1386" y="984">15</text><text x="669" y="923">C</text></g>
      <g class="col-fill"><path d="M1283 407h66v21h-28v20h-21v-20h-17zM1423 407h66v21h-17v20h-21v-20h-28zM1300 541h21v21h21v21h-42zM1451 541h21v42h-42v-21h21zM1375 562h21v45h-21zM903 613h21v28h-21zM903 770h21v29h-21zM903 881h21v41h-46v-21h25zM1375 770h22v29h-22zM1375 881h22v20h41v21h-104v-21h41z"/></g>
      <path fill="#000" d="M903 600h21v13h-21z"/>
      <path class="ov" d="M1283 421h66M1423 421h66M1311 421v27M1462 421v27M1311 541v31h31M1462 541v31h-32M1386 562v45M913 613v28M913 770v29M913 881v41M878 915h46M1386 770v29M1386 881v41M1334 915h104"/>
      <path class="edge" d="M1283 407h66v21h-28v134h130v-134h-28v-21h66v21h-17v155h-76v24h-21v-24h-75v-155h-17zM903 600v41h21v-41M903 770h21v152h-46v-21h25zM1375 770h22v131h41v21h-104v-21h41z"/>
      <path fill="#0aa91e" d="M714 924v-19h-4l7-12 7 12h-3v19z"/><path fill="#f0300c" d="M722 926h21v-4l12 7-12 7v-4h-21z"/><path fill="#0a16d8" d="M709 925l4-3h8l2 3v9l-3 2h-8l-3-3z"/>
      <path d="M711 876l6 9 6-9M717 885v8" stroke="#0a9a1e" stroke-width="2" fill="none"/><path d="M757 922l10 14M767 922l-10 14" stroke="#f0300c" stroke-width="2"/>
      <path d="M965 691v16l4-3 3 7 3-1-3-7h5z" fill="#fff" stroke="#333" stroke-width=".6"/>
    </svg>
    <div class="steps"><header><button class="bare text-white" aria-label="关闭"><svg width="9" height="9" class="d-block"><use href="#xx"/></svg></button></header>
      <div class="stack"><button>提取剪力墙边线</button><button>提取墙标识</button><button>提取门窗线</button><button>识别剪力墙</button></div></div>
    <div class="ask" role="dialog" aria-label="识别剪力墙">
      <div class="head d-flex justify-content-between align-items-center"><span>识别剪力墙</span><button class="bare" aria-label="关闭"><svg width="15" height="15" class="d-block"><path d="M1 1l13 13M14 1L1 14" stroke="#888" stroke-width="1.4"/></svg></button></div>
      <div class="body2 d-flex"><svg viewBox="0 0 36 36"><circle cx="18" cy="18" r="18" fill="#1b76d2"/><path d="M13 14q0-5 5-5t5 5q0 2-3 4-2 1-2 4M18 25v3" fill="none" stroke="#fff" stroke-width="3"/></svg><div>识别墙之前请先绘好柱，此时识别的墙端<br>头会自动延伸到柱内，是否继续？</div></div>
      <div class="foot d-flex justify-content-end"><button class="yes">是</button><button class="no">否</button></div>
    </div>
  </section>
</main>
<footer class="status d-flex align-items-center">
  <span class="st1">= 16739</span><span class="st2">层高：</span><span class="st3">3.9</span><span class="st4">标高：</span><span class="st5">-0.03~3.87</span><span class="st6">0</span><span class="st7">隐藏：</span><span class="st8">0</span>
  <div class="stools d-flex">
    <button aria-label="正交"><svg class="ic"><path class="k" d="M3 2v16h15M3 12h5v6"/></svg></button>
    <button class="on" aria-label="捕捉"><svg class="ic"><rect class="b" x="3" y="3" width="15" height="15" rx="2"/><circle class="f" cx="3" cy="3" r="2.5"/></svg><span class="tri tri-sm"></span></button>
    <button class="idle" aria-label="交点"><svg class="ic"><path class="k" d="M1 1l18 18M19 1L1 19"/></svg></button>
    <button aria-label="角度"><svg class="ic"><path class="k" d="M17 2L2 17h16"/></svg><span class="tri tri-sm"></span></button>
    <button aria-label="偏移量"><svg class="ic"><path class="k" d="M5 2v8M1 6h8"/><path d="M8 12h12v5H8z" fill="#333"/></svg><span class="tri tri-sm"></span></button>
    <button aria-label="图层"><svg class="ic"><path class="k" d="M2 2h14v14H2z"/><path d="M4 4h10v10H4zM16 8h3v4h-3zM13 15h6v3h-6z" fill="#3c4654"/></svg></button>
    <button aria-label="路径"><svg class="ic"><path class="k" d="M1 18Q3 6 8 5l10-3"/><path d="M13 10l6 5-4 3z" fill="#444"/></svg></button>
  </div>
  <span>左键选择墙构件&lt;点击识别按钮/Esc放弃&gt;</span>
</footer>
<div class="task d-flex align-items-center justify-content-between">
  <div class="apps d-flex">
    <button class="bare" aria-label="浏览器"><svg viewBox="0 0 32 32"><circle cx="16" cy="16" r="14" fill="#e6f3df"/><circle cx="16" cy="16" r="13" fill="#4da23c"/><path d="M8 16h16q-1-8-8-8t-8 8q1 8 8 8 5 0 7-4" fill="none" stroke="#fff" stroke-width="3.4"/></svg></button>
    <button class="bare" aria-label="资源管理器"><svg viewBox="0 0 32 32"><path d="M2 4h11l2 4h14v18H2z" fill="#f2c14e"/><path d="M2 11h28v15H2z" fill="#fbe08f"/><path d="M8 18h16v11h-4v-5h-8v5H8z" fill="#3c9bdc"/></svg></button>
    <button class="bare" aria-label="相册"><svg viewBox="0 0 32 32"><circle cx="16" cy="16" r="15" fill="#f2b21c"/><path d="M16 16L16 1A15 15 0 0 1 31 14z" fill="#c24fd8"/><path d="M16 16L31 14A15 15 0 0 1 22 30z" fill="#2f7de0"/><path d="M16 16L22 30A15 15 0 0 1 6 27z" fill="#35b04c"/><path d="M16 16L3 9A15 15 0 0 1 16 1z" fill="#e8413a"/><circle cx="16" cy="16" r="4" fill="#fff"/></svg></button>
    <button class="bare" aria-label="WPS"><svg viewBox="0 0 32 32"><path d="M2 5h8l3 13 4-13h13l-9 23h-5l-3-8-3 8H8z" fill="#d9381e"/><path d="M13 9h7l-4 12z" fill="#333"/><path d="M11 7h7l4 9-3 8z" fill="#f35a2c"/></svg></button>
    <button class="bare" aria-label="搜狗"><svg viewBox="0 0 32 32"><circle cx="16" cy="16" r="15" fill="#f4f9ff"/><circle cx="16" cy="16" r="13" fill="#2a78cc"/><path d="M23 8q-10-4-12 1-1 4 5 6 7 3 5 7-3 5-13 1" fill="none" stroke="#fff" stroke-width="5"/></svg></button>
    <button class="bare" aria-label="工作"><svg viewBox="0 0 32 32"><rect x="2" y="1" width="23" height="24" rx="2" fill="#e4502a"/><text x="2" y="17" font-size="11" font-weight="700" fill="#fff">工作</text><rect x="19" y="17" width="12" height="14" rx="2" fill="#5b8fdf"/><path d="M22 21v7h6v-7M25 22v6" stroke="#fff" fill="none"/></svg></button>
    <button class="bare" aria-label="CAD"><svg viewBox="0 0 32 32"><rect x="1" y="1" width="30" height="30" rx="2" fill="#9ec4ec"/><rect x="3" y="3" width="26" height="26" fill="#1458a6"/><text x="16" y="21" font-size="12" fill="#fff" text-anchor="middle">CAD</text></svg></button>
    <button class="bare on" aria-label="GTJ"><svg viewBox="0 0 32 32"><rect x="1" y="1" width="30" height="30" rx="5" fill="#d8efff"/><path d="M7 6h18v6h-6v14h-6V12H7z" fill="#1479e0"/></svg></button>
    <button class="bare" aria-label="Camtasia"><svg viewBox="0 0 32 32"><rect x="1" y="1" width="30" height="30" rx="2" fill="#7ab52c"/><rect x="4" y="4" width="24" height="24" fill="#2f7a12"/><path d="M24 12V8H13q-4 0-4 4v8q0 4 4 4h11v-4" fill="none" stroke="#fff" stroke-width="4"/></svg></button>
    <button class="bare" aria-label="播放器"><svg viewBox="0 0 32 32"><path d="M4 1h17l7 6v24H4z" fill="#e8720c"/><path d="M21 1l7 6h-7z" fill="#f7b070"/><path d="M12 10l10 6-10 6z" fill="#fff"/></svg></button>
    <button class="bare" aria-label="录屏"><svg viewBox="0 0 32 32"><rect x="1" y="1" width="30" height="30" rx="2" fill="#f8977a"/><rect x="3" y="3" width="26" height="26" fill="#ec5a3a"/><path d="M25 12V8H13q-4 0-4 4v8q0 4 4 4h12v-4" fill="none" stroke="#fff" stroke-width="4"/></svg></button>
  </div>
  <div class="tray d-flex align-items-center">
    <svg class="me-3" viewBox="0 0 20 20"><circle cx="14" cy="5" r="3.2"/><circle cx="6" cy="11" r="3"/><path d="M1 19q1-5 5-5 3 0 4 4M9 11q2-3 5-3t5 5"/></svg>
    <svg viewBox="0 0 20 20"><path d="M2 14l8-8 8 8"/></svg>
    <svg viewBox="0 0 20 20"><path d="M6 6h12v9H6z" fill="#eee"/><path d="M19 9v3M1 3v4h4V3M3 7v9"/></svg>
    <svg viewBox="0 0 20 20"><path d="M7 3h12v11H5V9M5 18h10M10 14v4M1 2v5h4V2"/></svg>
    <svg viewBox="0 0 20 20"><path d="M1 7h3l5-4v14l-5-4H1zM12 7q2 3 0 6M15 5q3 5 0 10M18 3q3 7 0 14"/></svg>
    <span>中</span>
  </div>
</div>
<div class="strip"><div class="under d-flex"><i></i><i><b></b></i><i></i><i><b></b></i><i><b></b></i><i><b></b></i><i><b></b></i><i><b></b></i><i><b></b></i><i><b></b></i><i><b></b></i></div></div>
</div>
</body>
</html>
